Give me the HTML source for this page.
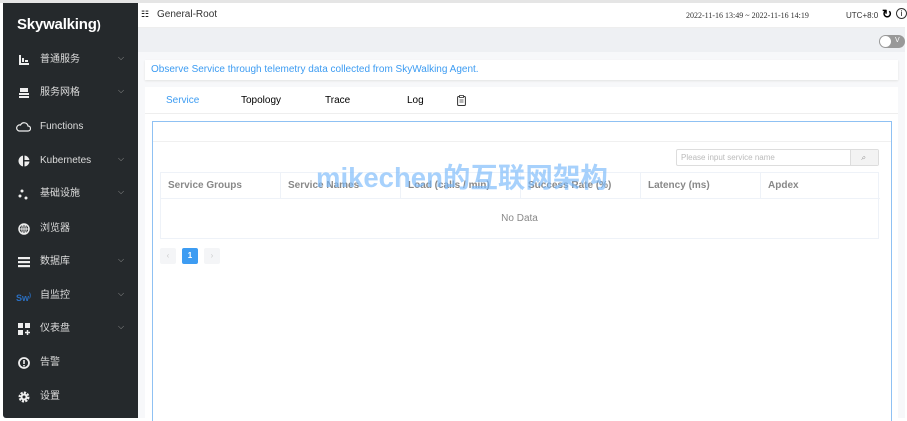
<!DOCTYPE html>
<html><head><meta charset="utf-8"><style>
*{box-sizing:border-box;margin:0;padding:0}
body{width:907px;height:420px;background:#fff;font-family:"Liberation Sans","Noto Sans CJK SC",sans-serif;position:relative;overflow:hidden}
.side{position:absolute;left:3px;top:3px;width:135px;height:415px;background:#25292c;border-radius:0 0 0 3px}
.logo{position:absolute;left:14px;top:13px;color:#fff;font-size:15px;font-weight:bold;letter-spacing:-0.2px}
.mi{position:absolute;left:0;width:135px;height:20px;color:#ddd;font-size:10px;line-height:20px}
.mi .ic{position:absolute;left:15px;top:4px;width:12px;height:12px;color:#eee}
.mi .t{position:absolute;left:37px}
.mi .ch{position:absolute;left:115px;top:-2px;color:#999;font-size:8px}
.main{position:absolute;left:138px;top:3px;width:767px;height:415px;background:#f7f8fa}
.hdr{position:absolute;left:0;top:0;width:767px;height:25px;background:#fff;border-bottom:1px solid #eee;font-size:10px}
.bar{position:absolute;left:0;top:25px;width:767px;height:24px;background:#eef0f3}
.desc{position:absolute;left:7px;top:57px;width:753px;height:20px;background:#fff;color:#3d9cf2;font-size:10px;line-height:20px;padding-left:6px;box-shadow:0 1px 2px #e3e3e3}
.card{position:absolute;left:7px;top:84px;width:753px;height:331px;background:#fff}
.tabs{height:27px;border-bottom:1px solid #eee;font-size:10px;position:relative}
.tabs span{position:absolute;top:8px}
.box{position:absolute;left:7px;top:34px;width:740px;height:300px;border:1px solid #8fc1f3;border-bottom:none}
.line{position:absolute;left:0;top:19px;width:738px;border-top:1px solid #f0f0f0}
.search{position:absolute;left:523px;top:27px;width:203px;height:17px;border:1px solid #ddd;border-radius:2px;font-size:8px;color:#bbb;line-height:15px;padding-left:4px}
.search i{position:absolute;right:0;top:0;width:28px;height:15px;background:#f3f3f3;border-left:1px solid #ddd}
.tbl{position:absolute;left:7px;top:50px;width:719px;height:67px;border:1px solid #eef2f8}
.th{position:absolute;top:0;height:26px;line-height:26px;font-size:10px;font-weight:bold;color:#888;padding-left:7px;border-right:1px solid #eef2f8;border-bottom:1px solid #eef2f8;width:120px}
.pg{position:absolute;top:126px;width:16px;height:16px;border-radius:2px;font-size:8px;text-align:center;line-height:16px;color:#ccc;background:#f4f5f7}
.wm{position:absolute;left:316px;top:155px;font-size:27.5px;font-weight:bold;color:rgba(120,185,250,.65);font-family:"Liberation Sans","Noto Sans CJK SC",sans-serif}
</style></head><body>
<div style="position:absolute;left:0;top:0;width:907px;height:3px;background:#e5e5e5"></div>
<div class="side">
<div class="logo">Skywalking<span style="font-size:12px">)</span></div>
<div class="mi" style="top:47px"><svg class="ic" viewBox="0 0 12 12"><path d="M1 1v10h10v-2H3V1z M4 4h2v4H4zM7 6h3v2H7z" fill="#eee"/></svg><span class="t">普通服务</span><span class="ch">⌵</span></div>
<div class="mi" style="top:80px"><svg class="ic" viewBox="0 0 12 12"><rect x="2" y="1" width="8" height="4" fill="#eee"/><rect x="1" y="6" width="10" height="2" fill="#eee"/><rect x="1" y="9" width="10" height="2" fill="#eee"/></svg><span class="t">服务网格</span><span class="ch">⌵</span></div>
<div class="mi" style="top:114px"><svg class="ic" style="width:15px;left:13px" viewBox="0 0 15 12"><path d="M3 10h9a2.5 2.5 0 0 0 0-5 4 4 0 0 0-7.5-1A3 3 0 0 0 3 10z" fill="none" stroke="#eee" stroke-width="1.2"/></svg><span class="t">Functions</span></div>
<div class="mi" style="top:148px"><svg class="ic" viewBox="0 0 12 12"><circle cx="6" cy="6" r="5.5" fill="#eee"/><rect x="5" y="0" width="1.5" height="12" fill="#25292c"/><rect x="6" y="5" width="6" height="1.5" fill="#25292c"/></svg><span class="t">Kubernetes</span><span class="ch">⌵</span></div>
<div class="mi" style="top:181px"><svg class="ic" viewBox="0 0 12 12"><circle cx="4" cy="3" r="1.5" fill="#eee"/><circle cx="2" cy="8" r="1.5" fill="#eee"/><circle cx="8" cy="10" r="1.5" fill="#eee"/></svg><span class="t">基础设施</span><span class="ch">⌵</span></div>
<div class="mi" style="top:216px"><svg class="ic" viewBox="0 0 12 12"><circle cx="6" cy="6" r="5" fill="none" stroke="#eee" stroke-width="1.5"/><path d="M1 6h10M6 1v10" stroke="#eee"/><ellipse cx="6" cy="6" rx="2.2" ry="5" fill="none" stroke="#eee"/></svg><span class="t">浏览器</span></div>
<div class="mi" style="top:249px"><svg class="ic" viewBox="0 0 12 12"><rect x="0" y="1" width="12" height="2.2" fill="#eee"/><rect x="0" y="5" width="12" height="2.2" fill="#eee"/><rect x="0" y="9" width="12" height="2.2" fill="#eee"/></svg><span class="t">数据库</span><span class="ch">⌵</span></div>
<div class="mi" style="top:283px"><span style="position:absolute;left:13px;color:#2a6fc2;font-weight:bold;font-size:9px">Sw<sup style="font-size:6px">)</sup></span><span class="t">自监控</span><span class="ch">⌵</span></div>
<div class="mi" style="top:316px"><svg class="ic" viewBox="0 0 12 12"><rect x="0" y="0" width="5" height="5" fill="#eee"/><rect x="7" y="0" width="5" height="5" fill="#eee"/><rect x="0" y="7" width="5" height="5" fill="#eee"/><path d="M9.5 7v5M7 9.5h5" stroke="#eee" stroke-width="1.5"/></svg><span class="t">仪表盘</span><span class="ch">⌵</span></div>
<div class="mi" style="top:350px"><svg class="ic" viewBox="0 0 12 12"><circle cx="6" cy="6" r="5" fill="none" stroke="#eee" stroke-width="1.8"/><rect x="5.2" y="3" width="1.6" height="4" fill="#eee"/><rect x="5.2" y="8" width="1.6" height="1.5" fill="#eee"/></svg><span class="t">告警</span></div>
<div class="mi" style="top:384px"><svg class="ic" viewBox="0 0 12 12"><circle cx="6" cy="6" r="4" fill="none" stroke="#eee" stroke-width="3" stroke-dasharray="2 1.1"/><circle cx="6" cy="6" r="3.5" fill="#eee"/><circle cx="6" cy="6" r="1.5" fill="#25292c"/></svg><span class="t">设置</span></div>
</div>
<div class="main">
<div class="hdr"><span style="position:absolute;left:3px;top:6px;font-size:9px">☷</span><span style="position:absolute;left:19px;top:6px;color:#333">General-Root</span>
<span style="position:absolute;left:548px;top:8px;font-size:8px;font-family:'Liberation Serif',serif;color:#333">2022-11-16 13:49 ~ 2022-11-16 14:19</span>
<span style="position:absolute;left:708px;top:8px;font-size:8px;color:#333">UTC+8:0</span>
<span style="position:absolute;left:744px;top:4px;font-size:12px;font-weight:bold">↻</span>
<span style="position:absolute;left:758px;top:5px;width:11px;height:11px;border:1px solid #333;border-radius:50%;font-size:8px;text-align:center;line-height:9px">i</span></div>
<div class="bar"><div style="position:absolute;left:741px;top:7px;width:26px;height:13px;border-radius:7px;background:#999"><div style="position:absolute;left:1px;top:1px;width:11px;height:11px;border-radius:50%;background:#fff"></div><span style="position:absolute;left:16px;top:2px;font-size:7px;color:#fff">V</span></div></div>
<div class="desc">Observe Service through telemetry data collected from SkyWalking Agent.</div>
<div class="card">
<div class="tabs"><span style="left:21px;color:#3d9cf2">Service</span><span style="left:96px">Topology</span><span style="left:180px">Trace</span><span style="left:262px">Log</span>
<svg style="position:absolute;left:312px;top:8px" width="9" height="11" viewBox="0 0 9 11"><rect x="0.6" y="1.5" width="7.8" height="9" rx="1" fill="none" stroke="#333"/><rect x="2.5" y="0.5" width="4" height="2" fill="#fff" stroke="#333" stroke-width=".8"/><path d="M2.5 5h4M2.5 7h4" stroke="#333" stroke-width=".8"/></svg></div>
<div class="box"><div class="line"></div>
<div class="search">Please input service name<i><span style="position:absolute;left:10px;top:0;font-size:8px;color:#888">⌕</span></i></div>
<div class="tbl">
<div class="th" style="left:0">Service Groups</div><div class="th" style="left:120px">Service Names</div><div class="th" style="left:240px">Load (calls / min)</div><div class="th" style="left:360px">Success Rate (%)</div><div class="th" style="left:480px">Latency (ms)</div><div class="th" style="left:600px;width:119px;border-right:none">Apdex</div>
<div style="position:absolute;top:40px;width:100%;text-align:center;font-size:10px;color:#888">No Data</div>
</div>
<div class="pg" style="left:7px">‹</div><div class="pg" style="left:29px;background:#3d9cf2;color:#fff;font-weight:bold">1</div><div class="pg" style="left:51px">›</div>
</div></div>
</div>
<div class="wm">mikechen的互联网架构</div>
</body></html>
